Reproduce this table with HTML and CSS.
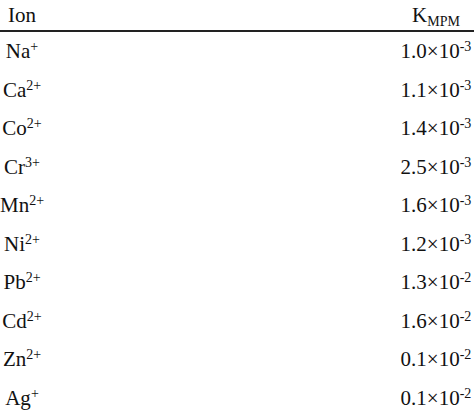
FILE: index.html
```html
<!DOCTYPE html>
<html>
	<head>
		<title>Ion constants</title>
		<link rel="stylesheet" href="styles.css">
	</head>
	<body>
		<section id="ionTable">
			<div class="row head">
				<div class="ion">Ion</div>
				<div class="k">K<sub>MPM</sub></div>
			</div>
			<div class="row">
				<div class="ion">Na<sup>+</sup></div>
				<div class="k">1.0&times;10<sup>-3</sup></div>
			</div>
			<div class="row">
				<div class="ion">Ca<sup>2+</sup></div>
				<div class="k">1.1&times;10<sup>-3</sup></div>
			</div>
			<div class="row">
				<div class="ion">Co<sup>2+</sup></div>
				<div class="k">1.4&times;10<sup>-3</sup></div>
			</div>
			<div class="row">
				<div class="ion">Cr<sup>3+</sup></div>
				<div class="k">2.5&times;10<sup>-3</sup></div>
			</div>
			<div class="row">
				<div class="ion">Mn<sup>2+</sup></div>
				<div class="k">1.6&times;10<sup>-3</sup></div>
			</div>
			<div class="row">
				<div class="ion">Ni<sup>2+</sup></div>
				<div class="k">1.2&times;10<sup>-3</sup></div>
			</div>
			<div class="row">
				<div class="ion">Pb<sup>2+</sup></div>
				<div class="k">1.3&times;10<sup>-2</sup></div>
			</div>
			<div class="row">
				<div class="ion">Cd<sup>2+</sup></div>
				<div class="k">1.6&times;10<sup>-2</sup></div>
			</div>
			<div class="row">
				<div class="ion">Zn<sup>2+</sup></div>
				<div class="k">0.1&times;10<sup>-2</sup></div>
			</div>
			<div class="row">
				<div class="ion">Ag<sup>+</sup></div>
				<div class="k">0.1&times;10<sup>-2</sup></div>
			</div>
		</section>
	</body>
</html>
```

FILE: styles.css
```css
html, body {
	height: 100%;
}

body {
	margin: 0px;
	padding: 0px;
	font-family: "Liberation Serif", "Times New Roman", serif;
	font-size: 21px;
	color: #111;
	background-color: #FFF;
	overflow: hidden;
}

#ionTable {
	display: flex;
	flex-direction: column;
}

.row {
	display: flex;
	justify-content: space-between;
	height: 38.5px;
	line-height: 38.5px;
	padding-right: 2px;
}

.row.head {
	height: 30px;
	line-height: 30px;
	border-bottom: 2px solid #222;
}

.ion {
	width: 44px;
	text-align: center;
	white-space: nowrap;
}

.k {
	width: 72px;
	text-align: center;
	white-space: nowrap;
}

sup {
	font-size: 14px;
	line-height: 0;
	vertical-align: 7px;
}

sub {
	font-size: 14px;
	line-height: 0;
	vertical-align: -4px;
}
```
